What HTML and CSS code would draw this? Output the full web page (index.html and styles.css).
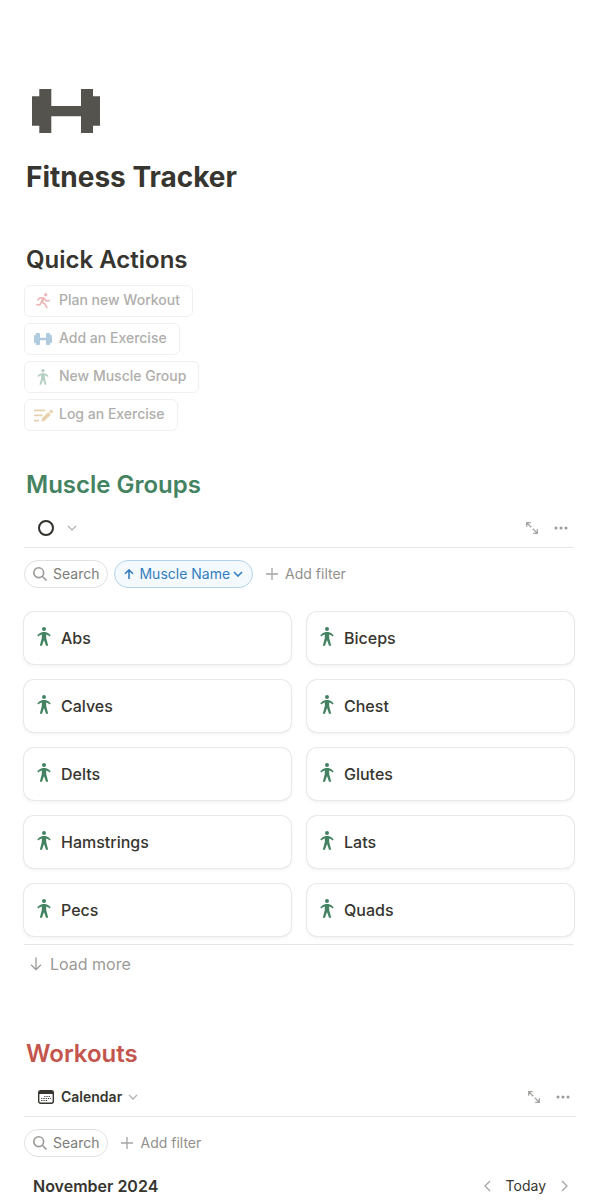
FILE: index.html
```
<!DOCTYPE html>
<html lang="en">
<head>
<meta charset="utf-8">
<title>Fitness Tracker</title>
<link rel="stylesheet" href="styles.css">
</head>
<body>
<svg class="sprite" aria-hidden="true">
  <symbol id="dumbbell" viewBox="0 0 68 44"><path d="M7.3 0h12v17h29.7V0h12v7.3H68v29.5h-7V44H49V27.2H19.3V44h-12v-7.2H0V7.3h7.3z"/></symbol>
  <symbol id="person" viewBox="0 0 14 19"><circle cx="7" cy="2.100" r="2"/><path d="M.3 8.200Q3 5.400 5.600 5h2.800Q11 5.400 13.700 8.200l-.9 1.400Q11 8 9.200 7.500V11l2 7.700H9L7.200 13.400h-.4L5 18.700H2.800l2-7.700V7.500Q3 8 1.200 9.600z"/></symbol>
  <symbol id="runner" viewBox="0 0 14 16"><circle cx="9.700" cy="1.800" r="1.700"/><path d="M2 6.900 3.900 4.800 7.600 4.900 5.700 9 8.900 11 10.900 14.600M8.100 5.200l2.200 2.700 2.700-.3M5.200 9.600 3.900 11.800.9 11.900" fill="none" stroke="currentColor" stroke-width="1.700" stroke-linejoin="round" stroke-linecap="round"/><path d="m6 4.100 3 1.200-2.200 5-2.300-1.200z"/></symbol>
  <symbol id="log" viewBox="0 0 19 13"><path d="M0 .5h11.300v1.800H0zM0 5.500h8.500v1.800H0zM0 10.700h5v1.800H0zM7.300 12.700l.9-3.600 6-6 2.600 2.600-6 6zM15 2.300l1.500-1.500q.5-.5 1 0l1.500 1.500q.4.500-.1 1l-1.500 1.500z"/></symbol>
  <symbol id="down" viewBox="0 0 10 6"><path class="line" d="m1 1 4 4 4-4"/></symbol>
  <symbol id="search" viewBox="0 0 14 14"><circle class="line" cx="5.700" cy="5.700" r="4.900"/><path class="line" d="m9.200 9.200 4.300 4.300"/></symbol>
  <symbol id="plus" viewBox="0 0 12 12"><path class="line" d="M6 0v12M0 6h12"/></symbol>
  <symbol id="expand" viewBox="0 0 12 12"><path class="line" d="M.7 4.800V.7h4.100M.8.8l4.400 4.400M11.300 7.200v4.100H7.200M11.200 11.200 6.800 6.800"/></symbol>
  <symbol id="dots" viewBox="0 0 14 4"><circle cx="2" cy="2" r="1.500"/><circle cx="7" cy="2" r="1.500"/><circle cx="12" cy="2" r="1.500"/></symbol>
</svg>
<main class="page">
  <svg class="page-icon"><use href="#dumbbell"/></svg>
  <h1>Fitness Tracker</h1>

  <section class="actions">
    <h2>Quick Actions</h2>
    <div class="action-list">
      <div class="action"><span class="action-icon red"><svg class="i-runner"><use href="#runner"/></svg></span>Plan new Workout</div>
      <div class="action"><span class="action-icon blue"><svg class="i-bell" viewBox="0 0 18 12"><path d="M2.500 0H5q1 0 1 1v3.700h6V1q0-1 1-1h2.500q.7 0 .7.700V2h.8q1 0 1 1v6q0 1-1 1h-.8v1.300q0 .7-.7.700H13q-1 0-1-1V7.300H6V11q0 1-1 1H2.500q-.7 0-.7-.7V10H1q-1 0-1-1V3q0-1 1-1h.8V.7q0-.7.700-.7z"/></svg></span>Add an Exercise</div>
      <div class="action"><span class="action-icon green"><svg class="i-small-person"><use href="#person"/></svg></span>New Muscle Group</div>
      <div class="action"><span class="action-icon gold"><svg class="i-log"><use href="#log"/></svg></span>Log an Exercise</div>
    </div>
  </section>

  <section class="muscles">
    <h2>Muscle Groups</h2>
    <div class="view-bar">
      <span class="ring"></span>
      <svg class="i-down ring-down"><use href="#down"/></svg>
      <svg class="i-expand"><use href="#expand"/></svg>
      <svg class="i-dots"><use href="#dots"/></svg>
    </div>
    <div class="filters">
      <div class="pill"><svg class="i-search"><use href="#search"/></svg>Search</div>
      <div class="pill sort">
        <svg class="i-up" viewBox="0 0 10 10"><path class="line" d="M5 10V1M1 4.800 5 .9l4 3.900"/></svg>Muscle Name<svg class="i-sort-down"><use href="#down"/></svg>
      </div>
      <div class="add"><svg class="i-plus"><use href="#plus"/></svg>Add filter</div>
    </div>
    <div class="cards">
      <div class="card"><svg class="i-person"><use href="#person"/></svg>Abs</div>
      <div class="card"><svg class="i-person"><use href="#person"/></svg>Biceps</div>
      <div class="card"><svg class="i-person"><use href="#person"/></svg>Calves</div>
      <div class="card"><svg class="i-person"><use href="#person"/></svg>Chest</div>
      <div class="card"><svg class="i-person"><use href="#person"/></svg>Delts</div>
      <div class="card"><svg class="i-person"><use href="#person"/></svg>Glutes</div>
      <div class="card"><svg class="i-person"><use href="#person"/></svg>Hamstrings</div>
      <div class="card"><svg class="i-person"><use href="#person"/></svg>Lats</div>
      <div class="card"><svg class="i-person"><use href="#person"/></svg>Pecs</div>
      <div class="card"><svg class="i-person"><use href="#person"/></svg>Quads</div>
    </div>
    <div class="more"><svg class="i-load" viewBox="0 0 12 14"><path class="line" d="M6 .5v12M1 7.700l5 5 5-5"/></svg>Load more</div>
  </section>

  <section class="workouts">
    <h2>Workouts</h2>
    <div class="view-bar wide">
      <svg class="i-calendar" viewBox="0 0 16 14"><rect x=".7" y=".7" width="14.600" height="12.600" rx="2" fill="none" stroke="currentColor" stroke-width="1.400"/><path d="M1 1h14v3H1z"/><path d="M6.200 6.500h6.900M3.200 8.500h9.900M3.200 10.500h6.900" fill="none" stroke="currentColor" stroke-width="1.100" stroke-dasharray="1.200 1.050"/></svg>
      <span class="view-name">Calendar</span>
      <svg class="i-down"><use href="#down"/></svg>
      <svg class="i-expand"><use href="#expand"/></svg>
      <svg class="i-dots"><use href="#dots"/></svg>
    </div>
    <div class="filters">
      <div class="pill"><svg class="i-search"><use href="#search"/></svg>Search</div>
      <div class="add"><svg class="i-plus"><use href="#plus"/></svg>Add filter</div>
    </div>
    <div class="month">
      <strong>November 2024</strong>
      <svg class="i-side" viewBox="0 0 7 12"><path class="line" d="M6 1 1 6l5 5"/></svg>
      <span class="today">Today</span>
      <svg class="i-side" viewBox="0 0 7 12"><path class="line" d="m1 1 5 5-5 5"/></svg>
    </div>
  </section>
</main>
</body>
</html>
```
FILE: styles.css
```
* { box-sizing: border-box; }
body {
  margin: 0;
  height: 1200px;
  overflow: hidden;
  background: #fff;
  color: #37352f;
  font-family: Inter, "Liberation Sans", sans-serif;
  font-size: 14px;
}
.sprite { position: absolute; width: 0; height: 0; }
svg { display: block; flex: none; fill: currentColor; }
.line { fill: none; stroke: currentColor; stroke-width: var(--line, 1.300); }
.page { padding: 89px 26px 0 24px; }
.page-icon { width: 68px; height: 44px; margin-left: 8px; color: #55534e; }
h1 { margin: 26px 0 0 2px; height: 36px; font-size: 28px; line-height: 36px; font-weight: 700; }
h2 { margin: 0 0 0 2px; height: 32px; font-size: 24px; line-height: 32px; font-weight: 600; }

.actions { padding-top: 49px; }
.action-list { display: flex; flex-direction: column; align-items: flex-start; gap: 6px; margin-top: 9px; }
.action {
  display: flex;
  align-items: center;
  height: 32px;
  padding: 0 12px 3px 8px;
  border: 1px solid #f0f0ef;
  border-radius: 6px;
  color: #afaeac;
  font-weight: 500;
}
.action-icon { display: flex; justify-content: center; width: 20px; margin-right: 6px; padding-top: 3px; }
.red { color: #edbbb8; }
.blue { color: #afcbdd; }
.green { color: #b5cfc2; }
.gold { color: #e6d2af; }
.i-runner { width: 14px; height: 16px; }
.i-bell { width: 18px; height: 12px; }
.i-small-person { width: 12px; height: 16px; }
.i-log { width: 19px; height: 13px; }

.muscles { padding-top: 38px; }
.muscles h2 { color: #448361; }
.view-bar {
  display: flex;
  align-items: center;
  height: 47px;
  padding: 0 6px 0 14px;
  border-bottom: 1px solid #e6e6e5;
}
.muscles .view-bar { padding-top: 8px; }
.ring { width: 16px; height: 16px; border: 2px solid #32302c; border-radius: 50%; }
.i-down { width: 10px; height: 6px; margin-left: 6px; color: #b5b4b1; }
.ring-down { margin-left: 13px; }
.i-expand { width: 12px; height: 12px; margin-left: auto; color: #a5a4a1; }
.i-dots { width: 14px; height: 4px; margin-left: 16px; color: #9b9a97; }
.filters { display: flex; align-items: center; height: 28px; margin-top: 12px; }
.pill {
  display: flex;
  align-items: center;
  height: 28px;
  margin-right: 6px;
  padding: 0 8px 1px;
  border: 1px solid #e1e1e0;
  border-radius: 14px;
  color: #7d7c78;
}
.i-search { width: 14px; height: 14px; margin-right: 6px; color: #9b9a97; --line: 1.600; }
.sort { padding: 0 9px 1px; border-color: #b4d3ea; background: #f3f9fd; color: #337ebd; }
.i-up { width: 10px; height: 10px; margin-right: 5px; --line: 1.600; }
.i-sort-down { width: 10px; height: 6px; margin-left: 3px; --line: 1.600; }
.add { display: flex; align-items: center; height: 28px; margin-left: 7px; padding-bottom: 1px; color: #91908d; }
.i-plus { width: 12px; height: 12px; margin-right: 7px; color: #a5a4a1; }
.cards {
  display: grid;
  grid-template-columns: 1fr 1fr;
  gap: 16px;
  margin: 24px 0 0;
}
.card {
  display: flex;
  align-items: center;
  height: 52px;
  padding-left: 13px;
  border-radius: 10px;
  box-shadow: 0 0 0 1px #e9e9e8, 0 2px 4px rgba(15, 15, 15, .06);
  font-size: 16px;
  font-weight: 500;
}
.i-person { width: 14px; height: 19px; margin: 0 10px 4px 0; color: #448361; }
.more {
  display: flex;
  align-items: center;
  height: 40px;
  margin-top: 8px;
  padding: 0 0 2px 6px;
  border-top: 1px solid #e6e6e5;
  color: #9b9a97;
  font-size: 16px;
}
.i-load { width: 12px; height: 14px; margin-right: 8px; }

.workouts { padding-top: 54px; }
.workouts h2 { color: #c4554d; }
.wide { margin-right: -2px; padding-top: 7px; }
.i-calendar { width: 16px; height: 14px; margin-right: 7px; }
.view-name { font-weight: 600; }
.month { display: flex; align-items: center; height: 30px; margin-top: 14px; padding: 0 6px 0 9px; }
.month strong { margin-right: auto; font-size: 16px; font-weight: 600; }
.i-side { width: 7px; height: 12px; color: #a5a4a1; }
.today { margin: 0 15px; padding-bottom: 2px; }
```
